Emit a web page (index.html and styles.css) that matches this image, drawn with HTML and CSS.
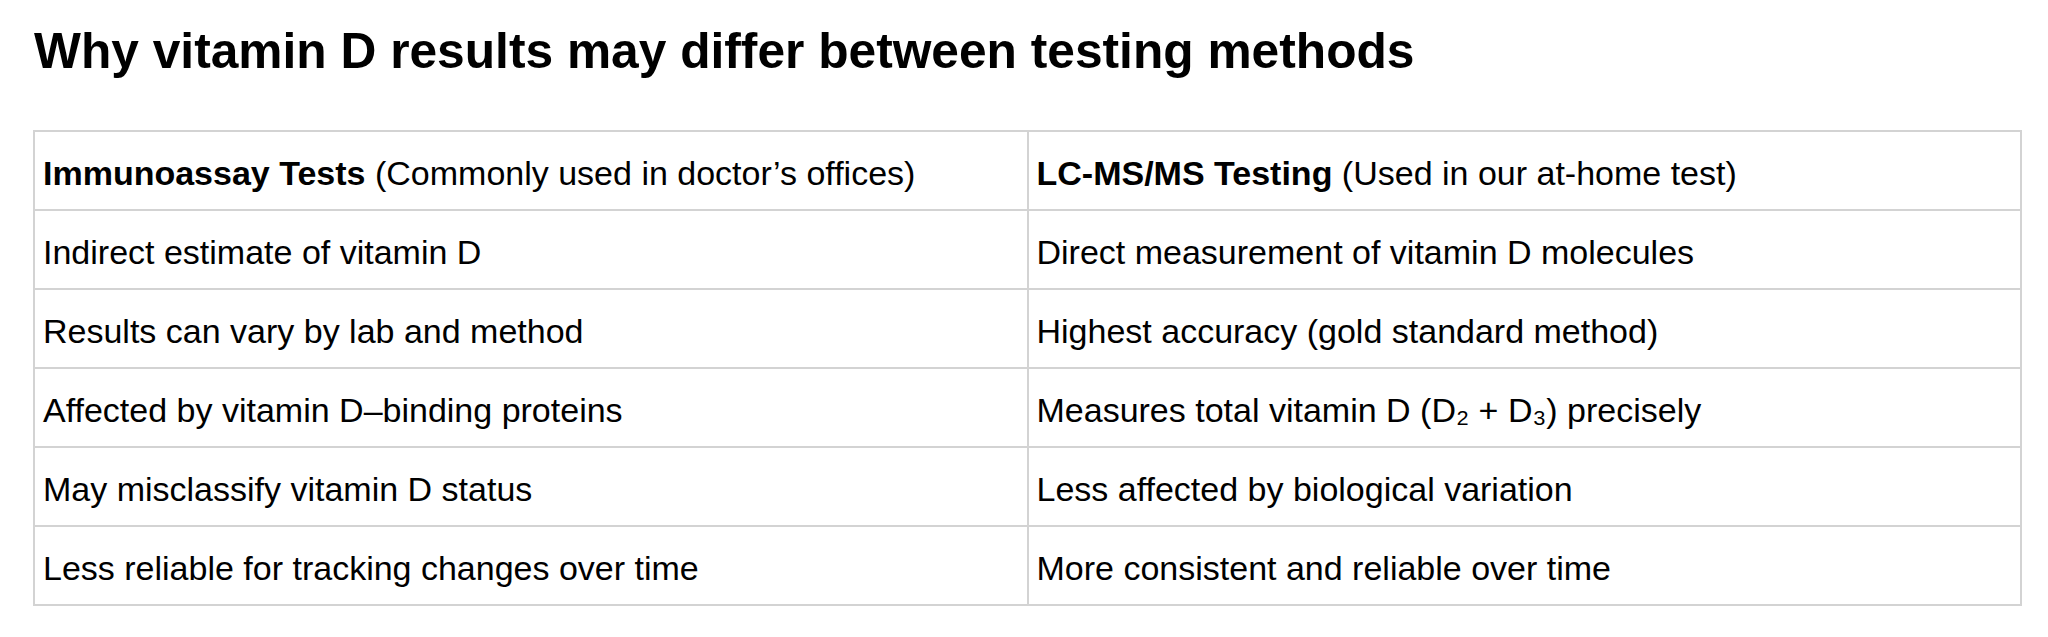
FILE: index.html
```html
<!DOCTYPE html>
<html lang="en">
<head>
<meta charset="utf-8">
<title>Why vitamin D results may differ between testing methods</title>
<link rel="stylesheet" href="styles.css">
</head>
<body>
<main class="page">
  <h1 class="title">Why vitamin D results may differ between testing methods</h1>
  <table class="compare">
    <tbody>
      <tr>
        <td><strong>Immunoassay Tests</strong> (Commonly used in doctor’s offices)</td>
        <td><strong>LC-MS/MS Testing</strong> (Used in our at-home test)</td>
      </tr>
      <tr>
        <td>Indirect estimate of vitamin D</td>
        <td>Direct measurement of vitamin D molecules</td>
      </tr>
      <tr>
        <td>Results can vary by lab and method</td>
        <td>Highest accuracy (gold standard method)</td>
      </tr>
      <tr>
        <td>Affected by vitamin D–binding proteins</td>
        <td>Measures total vitamin D (D₂ + D₃) precisely</td>
      </tr>
      <tr>
        <td>May misclassify vitamin D status</td>
        <td>Less affected by biological variation</td>
      </tr>
      <tr>
        <td>Less reliable for tracking changes over time</td>
        <td>More consistent and reliable over time</td>
      </tr>
    </tbody>
  </table>
</main>
</body>
</html>
```

FILE: styles.css
```css
html, body {
  margin: 0;
  padding: 0;
  background: #ffffff;
}

body {
  font-family: "Liberation Sans", Arial, sans-serif;
  color: #000000;
}

.page {
  padding: 23px 26px 0 33px;
}

.title {
  margin: 0 0 50px 1px;
  font-size: 49.7px;
  font-weight: 700;
  line-height: 57px;
}

.compare {
  width: 100%;
  border-collapse: collapse;
  table-layout: fixed;
}

.compare td {
  width: 50%;
  border: 2px solid #d3d3d3;
  padding: 22px 7px 16px 8px;
  font-size: 34px;
  line-height: 39px;
  vertical-align: top;
  white-space: nowrap;
}

.compare strong {
  font-weight: 700;
}
```
